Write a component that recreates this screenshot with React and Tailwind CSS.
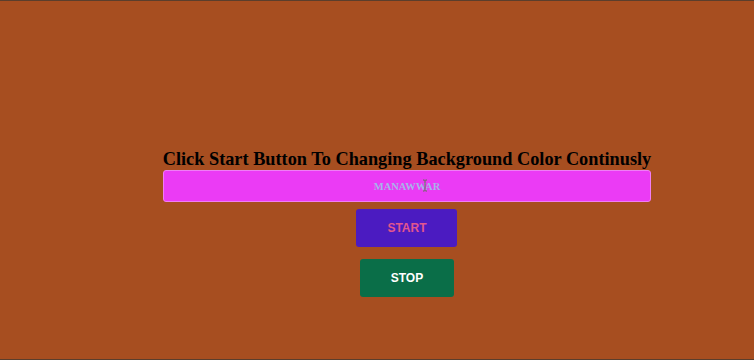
import React from 'react';

export default function App() {
  return (
    <div className="w-[754px] h-[360px] bg-[#a74e20] border-y border-[#5b3e2c] overflow-hidden">
      <div className="pt-[148px] pl-[60px] flex justify-center">
        <div className="flex flex-col items-center">
          {/* heading */}
          <h1 className="text-[18.3px] leading-[21px] font-bold text-black font-['Liberation_Serif',serif] whitespace-nowrap">
            Click Start Button To Changing Background Color Continusly
          </h1>

          <div className="relative w-full">
            <input
              readOnly
              value="MANAWWAR"
              className="w-full h-[32px] bg-[#eb3bf5] border border-[#f07ef5] rounded-[3px] text-center text-[10.5px] font-bold text-[#a8b2ea] font-['Liberation_Serif',serif] outline-none"
            />
            {/* mouse I-beam over the text */}
            <svg
              className="absolute left-[259px] top-[9px] pointer-events-none"
              width="6"
              height="13"
              viewBox="0 0 6 13"
            >
              <path d="M1 1h1.5l0.5 0.5l0.5-0.5H5M3 1.5v10M1 12h1.5l0.5-0.5l0.5 0.5H5" stroke="#5f7356" strokeWidth="1" fill="none" />
            </svg>
          </div>

          <button className="mt-[7px] w-[101px] h-[38px] bg-[#4b1bc1] rounded-[3px] text-[12px] font-bold text-[#e2568e] font-['Liberation_Sans',sans-serif]">
            START
          </button>

          <button className="mt-[12px] w-[94px] h-[38px] bg-[#0a6e48] rounded-[3px] text-[12px] font-bold text-white font-['Liberation_Sans',sans-serif]">
            STOP
          </button>
        </div>
      </div>
    </div>
  );
}
